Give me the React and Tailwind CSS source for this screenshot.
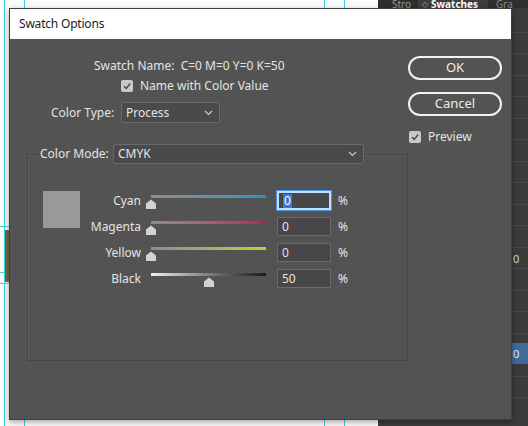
import React from "react";

const font = "font-['Noto_Sans','Liberation_Sans',sans-serif]";

const Check = () => (
  <span className="flex items-center justify-center w-[12px] h-[12px] rounded-[2px] bg-[#c9c9c9]">
    <svg width="10" height="10" viewBox="0 0 10 10">
      <path d="M2 5.2 L4.2 7.4 L8.2 2.6" fill="none" stroke="#4d4d4d" strokeWidth="1.6" />
    </svg>
  </span>
);

const Chevron = () => (
  <svg width="9" height="6" viewBox="0 0 9 6">
    <path d="M1 1 L4.5 4.5 L8 1" fill="none" stroke="#cfcfcf" strokeWidth="1.1" />
  </svg>
);

const channels = [
  { name: "Cyan", value: 0, track: "bg-gradient-to-r from-[#8c8c8c] to-[#1e94bd]", focus: true },
  { name: "Magenta", value: 0, track: "bg-gradient-to-r from-[#8c8c8c] to-[#b51a5e]" },
  { name: "Yellow", value: 0, track: "bg-gradient-to-r from-[#8c8c8c] to-[#c9c92a]" },
  { name: "Black", value: 50, track: "bg-gradient-to-r from-[#f2f2f2] to-[#1b1b1b]" },
];

const Backdrop = () => (
  <>
    {/* canvas guides */}
    <div className="absolute left-[4px] top-0 w-px h-full bg-[#3fd2d6]" />
    <div className="absolute left-[24px] top-0 w-px h-full bg-[#3fd2d6]" />
    <div className="absolute left-[324px] top-0 w-px h-full bg-[#3fd2d6]" />
    <div className="absolute left-[344px] top-0 w-px h-full bg-[#3fd2d6]" />
    <div className="absolute left-0 top-[226px] w-[10px] h-px bg-[#3fd2d6]" />
    <div className="absolute left-0 top-[272px] w-[10px] h-px bg-[#3fd2d6]" />
    <div className="absolute left-0 top-[283px] w-[10px] h-px bg-[#3fd2d6]" />
    <div className="absolute left-[5px] top-[230px] w-[5px] h-[52px] bg-[#6e6a45]" />

    {/* swatches panel */}
    <div className="absolute left-[378px] top-0 w-[150px] h-full bg-[#3b3b3b] flex flex-col">
      <div className={`flex items-start h-[8px] text-[10px] leading-[8px] ${font} bg-[#2f2f2f] whitespace-nowrap`}>
        <span className="shrink-0 pl-[14px] w-[40px] text-[#9a9a9a]">Stro</span>
        <span className="shrink-0 flex items-start gap-[3px] pl-[4px] w-[70px] h-full bg-[#3d3d3d] text-white font-bold">
          <span className="text-[#9a9a9a] font-normal text-[8px]">◇</span>Swatches
        </span>
        <span className="shrink-0 pl-[8px] text-[#8a8a8a]">Gra</span>
      </div>
      <div className="ml-auto w-[16px] flex-1 flex flex-col pt-[3px]">
        {Array.from({ length: 18 }).map((_, i) => (
          <div key={i} className="h-[21.5px] border-b border-[#474747] text-[11px] text-[#dcdcdc] leading-[21px] pl-[1px]">
            {i === 11 ? "0" : ""}
          </div>
        ))}
      </div>
    </div>
    <div className="absolute left-[512px] top-[343px] w-[16px] h-[21px] bg-[#3f6a9b] text-[11px] text-[#e6e6e6] leading-[21px]">
      <span className={`${font} pl-[1px]`}>0</span>
    </div>
  </>
);

const SliderRow = ({ c }) => (
  <div className="flex items-center h-[19px]">
    <span className="w-[61px] text-right">{c.name}</span>
    <div className="relative w-[136px] h-[19px]">
      <div className={`absolute left-[10px] top-[4px] w-[115px] h-[3px] ${c.track}`} />
      <svg
        className="absolute top-[8px]"
        style={{ left: 5 + (c.value / 100) * 115 }}
        width="10"
        height="10"
        viewBox="0 0 10 10"
      >
        <polygon points="0,10 0,4.5 5,0.5 10,4.5 10,10" fill="#d2d2d2" />
      </svg>
    </div>
    <div
      className={`w-[54px] h-[19px] flex items-center pl-[4px] bg-[#474747] ${
        c.focus ? "border-2 border-[#bfe0ff] shadow-[0_0_0_1px_#4a8fe0]" : "border border-[#6b6b6b]"
      }`}
    >
      {c.focus ? <span className="bg-[#3a78d8] text-white leading-[14px] px-[1px]">0</span> : c.value}
    </div>
    <span className="ml-[7px]">%</span>
  </div>
);

export default function App() {
  return (
    <div className={`relative w-[528px] h-[426px] overflow-hidden bg-[#fbfbfb] ${font} text-xs`}>
      <Backdrop />

      {/* dialog */}
      <div className="absolute left-[9px] top-[8px] w-[503px] h-[412px] flex flex-col bg-[#535353] border border-[#3e3e3e] shadow-[0_2px_6px_rgba(0,0,0,0.35)]">
        <div className="h-[30px] shrink-0 bg-white flex items-center pl-[9px] text-[12px] tracking-[-0.2px] text-[#1a1a1a]">
          Swatch Options
        </div>

        <div className="flex flex-1 text-[#e4e4e4]">
          {/* form */}
          <div className="w-[398px] flex flex-col pt-[19px]">
            <div className="pl-[84px] h-[16px] leading-[16px]">
              Swatch Name:&nbsp; C=0 M=0 Y=0 K=50
            </div>
            <div className="mt-[4px] pl-[111px] h-[16px] flex items-center gap-[7px]">
              <Check />
              <span>Name with Color Value</span>
            </div>
            <div className="mt-[8px] pl-[41px] flex items-center">
              <span className="w-[70px]">Color Type:</span>
              <div className="w-[99px] h-[21px] flex items-center justify-between pl-[4px] pr-[6px] bg-[#4a4a4a] border border-[#6a6a6a] rounded-[2px]">
                <span>Process</span>
                <Chevron />
              </div>
            </div>

            {/* group box */}
            <div className="mt-[31px] ml-[17px] w-[381px] h-[207px] border border-[#474747] shadow-[inset_1px_1px_0_#5c5c5c] flex flex-col">
              <div className="-mt-[11px] pl-[12px] flex items-center">
                <span className="w-[73px] bg-[#535353] h-[20px] leading-[20px]">Color Mode:</span>
                <div className="w-[251px] h-[20px] flex items-center justify-between pl-[4px] pr-[6px] bg-[#4a4a4a] border border-[#6a6a6a] rounded-[2px]">
                  <span>CMYK</span>
                  <Chevron />
                </div>
              </div>
              <div className="mt-[27px] pl-[15px] flex">
                <div className="w-[37px] h-[37px] bg-[#999999] shrink-0" />
                <div className="flex flex-col gap-[7px]">
                  {channels.map((c) => (
                    <SliderRow key={c.name} c={c} />
                  ))}
                </div>
              </div>
            </div>
          </div>

          {/* buttons */}
          <div className="w-[94px] flex flex-col pt-[17px]">
            <button className="h-[24px] rounded-full border-2 border-[#f2f2f2] text-[13px] text-[#ececec]">OK</button>
            <button className="mt-[12px] h-[24px] rounded-full border-2 border-[#f2f2f2] text-[13px] text-[#ececec]">Cancel</button>
            <div className="mt-[13px] ml-[1px] flex items-center gap-[7px]">
              <Check />
              <span>Preview</span>
            </div>
          </div>
        </div>
      </div>
    </div>
  );
}
